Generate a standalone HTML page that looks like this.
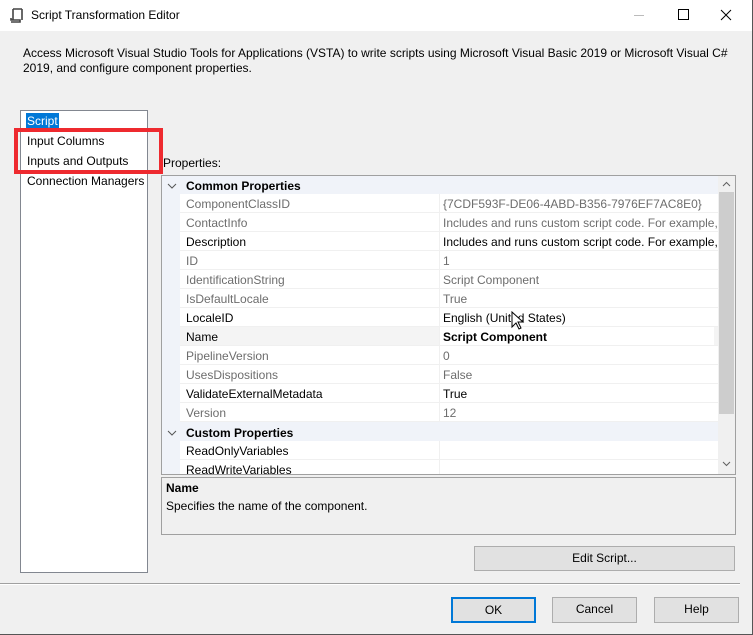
<!DOCTYPE html>
<html><head><style>
*{box-sizing:border-box;margin:0;padding:0}
body{width:753px;height:635px;background:#f0f0f0;font-family:"Liberation Sans",sans-serif;font-size:12px;color:#000;position:relative;overflow:hidden}
.a{position:absolute}
.row{position:absolute;left:180px;width:538px;height:19px;border-bottom:1px solid #f0f0f0;background:#fff}
.row span{position:absolute;top:3px;white-space:nowrap;overflow:hidden}
.n{left:6px;width:252px}
.v{left:263px;width:274px}
.row .sep{position:absolute;left:259px;top:0;width:1px;height:19px;background:#f0f0f0}
.g{color:#6d6d6d}
.btn{position:absolute;background:#e1e1e1;border:1px solid #adadad;text-align:center;line-height:23px}
</style></head><body>
<div class="a" style="left:0;top:0;width:753px;height:31px;background:#fff"></div>
<div class="a" style="right:0;top:0;width:1px;height:635px;background:#555"></div>
<div class="a" style="left:0;bottom:0;width:753px;height:1px;background:#555"></div>
<svg class="a" style="left:9px;top:7px" width="16" height="16"><path d="M4 2h9M13 2v11M4 2v11H2v-2M4 13h7v2H2" fill="none" stroke="#444" stroke-width="1.6"/></svg>
<div class="a" style="left:31px;top:8px;font-size:12px">Script Transformation Editor</div>
<div class="a" style="left:634px;top:15px;width:10px;height:1px;background:#bbb"></div>
<div class="a" style="left:678px;top:9px;width:11px;height:11px;border:1px solid #000"></div>
<svg class="a" style="left:720px;top:9px" width="12" height="12"><path d="M1 1L11 11M11 1L1 11" stroke="#000" stroke-width="1"/></svg>
<div class="a" style="left:23px;top:46px;line-height:15px;width:710px">Access Microsoft Visual Studio Tools for Applications (VSTA) to write scripts using Microsoft Visual Basic 2019 or Microsoft Visual C# 2019, and configure component properties.</div>

<div class="a" style="left:20px;top:110px;width:128px;height:463px;background:#fff;border:1px solid #828790"></div>
<div class="a" style="left:26px;top:113px;background:#0078d7;color:#fff;padding:0 1px;height:16px;line-height:16px">Script</div>
<div class="a" style="left:27px;top:134px">Input Columns</div>
<div class="a" style="left:27px;top:154px">Inputs and Outputs</div>
<div class="a" style="left:27px;top:174px">Connection Managers</div>
<div class="a" style="left:14px;top:128px;width:149px;height:46px;border:4px solid #ee2a2f"></div>

<div class="a" style="left:163px;top:156px">Properties:</div>
<div class="a" style="left:161px;top:175px;width:575px;height:300px;border:1px solid #a0a0a0;background:#f0f3f9"></div>
<div class="a" style="left:162px;top:176px;width:556px;height:298px;overflow:hidden">
 <svg class="a" style="left:5px;top:7px" width="10" height="6"><path d="M1 1l4 4 4-4" fill="none" stroke="#555"/></svg>
 <div class="a" style="left:24px;top:3px;font-weight:bold">Common Properties</div>
 <svg class="a" style="left:5px;top:254px" width="10" height="6"><path d="M1 1l4 4 4-4" fill="none" stroke="#555"/></svg>
 <div class="a" style="left:24px;top:250px;font-weight:bold">Custom Properties</div>
<div class="row" style="top:18px;left:18px"><span class="n g">ComponentClassID</span><i class="sep"></i><span class="v g">{7CDF593F-DE06-4ABD-B356-7976EF7AC8E0}</span></div>
<div class="row" style="top:37px;left:18px"><span class="n g">ContactInfo</span><i class="sep"></i><span class="v g">Includes and runs custom script code. For example, a</span></div>
<div class="row" style="top:56px;left:18px"><span class="n">Description</span><i class="sep"></i><span class="v">Includes and runs custom script code. For example, a</span></div>
<div class="row" style="top:75px;left:18px"><span class="n g">ID</span><i class="sep"></i><span class="v g">1</span></div>
<div class="row" style="top:94px;left:18px"><span class="n g">IdentificationString</span><i class="sep"></i><span class="v g">Script Component</span></div>
<div class="row" style="top:113px;left:18px"><span class="n g">IsDefaultLocale</span><i class="sep"></i><span class="v g">True</span></div>
<div class="row" style="top:132px;left:18px"><span class="n">LocaleID</span><i class="sep"></i><span class="v">English (United States)</span></div>
<div class="row" style="top:151px;left:18px;background:#f4f4f4"><span class="n">Name</span><i class="sep"></i><span class="v" style="font-weight:bold;background:#fff;left:260px;padding-left:3px;top:0;height:18px;line-height:20px">Script Component</span></div>
<div class="row" style="top:170px;left:18px"><span class="n g">PipelineVersion</span><i class="sep"></i><span class="v g">0</span></div>
<div class="row" style="top:189px;left:18px"><span class="n g">UsesDispositions</span><i class="sep"></i><span class="v g">False</span></div>
<div class="row" style="top:208px;left:18px"><span class="n">ValidateExternalMetadata</span><i class="sep"></i><span class="v">True</span></div>
<div class="row" style="top:227px;left:18px"><span class="n g">Version</span><i class="sep"></i><span class="v g">12</span></div>
<div class="row" style="top:265px;left:18px"><span class="n">ReadOnlyVariables</span><i class="sep"></i></div>
<div class="row" style="top:284px;left:18px"><span class="n">ReadWriteVariables</span><i class="sep"></i></div>
</div>
<div class="a" style="left:718px;top:176px;width:17px;height:298px;background:#f0f0f0"></div>
<div class="a" style="left:719px;top:192px;width:15px;height:222px;background:#cdcdcd"></div>
<svg class="a" style="left:722px;top:181px" width="9" height="6"><path d="M1 5l3.5-3.5L8 5" fill="none" stroke="#606060"/></svg>
<svg class="a" style="left:722px;top:461px" width="9" height="6"><path d="M1 1l3.5 3.5L8 1" fill="none" stroke="#606060"/></svg>
<svg class="a" style="left:511px;top:311px" width="14" height="20"><path d="M1 1v15l4-4 3 6 2-1-3-6h5z" fill="#fff" stroke="#000"/></svg>

<div class="a" style="left:161px;top:477px;width:575px;height:58px;border:1px solid #a0a0a0"></div>
<div class="a" style="left:166px;top:481px;font-weight:bold">Name</div>
<div class="a" style="left:166px;top:499px">Specifies the name of the component.</div>

<div class="btn" style="left:474px;top:546px;width:261px;height:25px">Edit Script...</div>
<div class="a" style="left:0;top:583px;width:740px;height:2px;background:#fff;border-top:1px solid #a0a0a0"></div>
<div class="btn" style="left:451px;top:597px;width:85px;height:26px;border:2px solid #0078d7;line-height:22px">OK</div>
<div class="btn" style="left:552px;top:597px;width:85px;height:26px">Cancel</div>
<div class="btn" style="left:654px;top:597px;width:85px;height:26px">Help</div>
</body></html>
